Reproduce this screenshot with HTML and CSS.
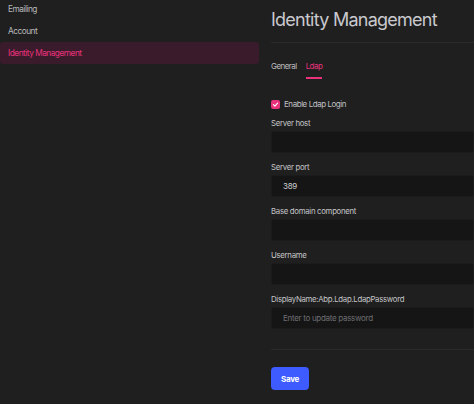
FILE: index.html
```html
<!DOCTYPE html>
<html>
<head>
<meta charset="utf-8">
<link rel="stylesheet" href="styles.css">
</head>
<body>
<div class="layout">
  <nav class="sidebar">
    <div class="nav-item">Emailing</div>
    <div class="nav-item">Account</div>
    <div class="nav-item active">Identity Management</div>
  </nav>
  <main class="main">
    <header class="header"><h1 class="title">Identity Management</h1></header>
    <div class="tabs">
      <span class="tab">General</span>
      <span class="tab tab-active">Ldap</span>
    </div>
    <label class="check-row">
      <span class="checkbox"><svg viewBox="0 0 10 10" width="7" height="7"><path d="M2 5.2 L4.1 7.2 L8 3" fill="none" stroke="#fff" stroke-width="1.6" stroke-linecap="round" stroke-linejoin="round"/></svg></span>
      <span class="check-label">Enable Ldap Login</span>
    </label>
    <div class="field">
      <div class="label">Server host</div>
      <div class="input"></div>
    </div>
    <div class="field">
      <div class="label">Server port</div>
      <div class="input">389</div>
    </div>
    <div class="field">
      <div class="label">Base domain component</div>
      <div class="input"></div>
    </div>
    <div class="field">
      <div class="label">Username</div>
      <div class="input"></div>
    </div>
    <div class="field">
      <div class="label">DisplayName:Abp.Ldap.LdapPassword</div>
      <div class="input placeholder">Enter to update password</div>
    </div>
    <div class="divider"></div>
    <button class="save">Save</button>
  </main>
</div>
</body>
</html>
```
FILE: styles.css
```css
html, body {
  margin: 0;
  padding: 0;
  background: #1f1f1f;
  overflow: hidden;
  height: 404px;
}
body {
  font-family: Inter, "Noto Sans", sans-serif;
  color: #c6c6c9;
}
.layout {
  display: grid;
  grid-template-columns: 259px 1fr;
  column-gap: 12px;
}
.sidebar {
  margin-top: -2px;
  display: flex;
  flex-direction: column;
}
.nav-item {
  height: 22px;
  line-height: 22px;
  padding-left: 8px;
  font-size: 8.3px;
  letter-spacing: -0.5px;
  color: #b9b9bc;
  border-radius: 3px;
}
.nav-item.active {
  background: #3a1b2b;
  color: #e8327c;
}
.main {
  display: flex;
  flex-direction: column;
  min-width: 0;
}
.header {
  height: 42px;
  border-bottom: 1px solid #2a2a2c;
}
.title {
  margin: 0;
  font-size: 18px;
  letter-spacing: -0.75px;
  font-weight: 400;
  line-height: 39px;
  color: #c9c9ce;
}
.tabs {
  margin-top: 17px;
  display: flex;
  gap: 9px;
}
.tab {
  font-size: 8px;
  letter-spacing: -0.55px;
  line-height: 13px;
  padding-bottom: 4px;
  border-bottom: 2px solid transparent;
  color: #bcbcbf;
}
.tab-active {
  color: #e8327c;
  border-bottom-color: #e8327c;
}
.check-row {
  margin-top: 20px;
  display: flex;
  align-items: center;
  gap: 4px;
  height: 10px;
  margin-bottom: 8px;
}
.checkbox {
  width: 9px;
  height: 9px;
  background: #e8327c;
  border-radius: 2px;
  display: flex;
  align-items: center;
  justify-content: center;
}
.check-label {
  font-size: 8px;
  letter-spacing: -0.45px;
  color: #c0c0c3;
}
.field {
  margin-bottom: 8px;
}
.label {
  font-size: 7.8px;
  letter-spacing: -0.3px;
  line-height: 12px;
  margin-bottom: 2px;
  color: #c4c4c7;
}
.input {
  height: 22px;
  box-sizing: border-box;
  background: #151515;
  border: 1px solid #1b1b1b;
  border-radius: 3px;
  padding-left: 11px;
  font-size: 8px;
  letter-spacing: -0.3px;
  line-height: 20px;
  color: #cfcfd2;
}
.input.placeholder {
  color: #6e6e72;
}
.divider {
  margin-top: 12px;
  border-top: 1px solid #2a2a2c;
}
.save {
  margin-top: 17px;
  align-self: flex-start;
  width: 38px;
  height: 23px;
  border: none;
  border-radius: 4px;
  background: #3d5bfe;
  color: #fff;
  font-family: Inter, "Noto Sans", sans-serif;
  font-size: 8px;
  letter-spacing: -0.3px;
  font-weight: 700;
  padding: 0;
}
```
